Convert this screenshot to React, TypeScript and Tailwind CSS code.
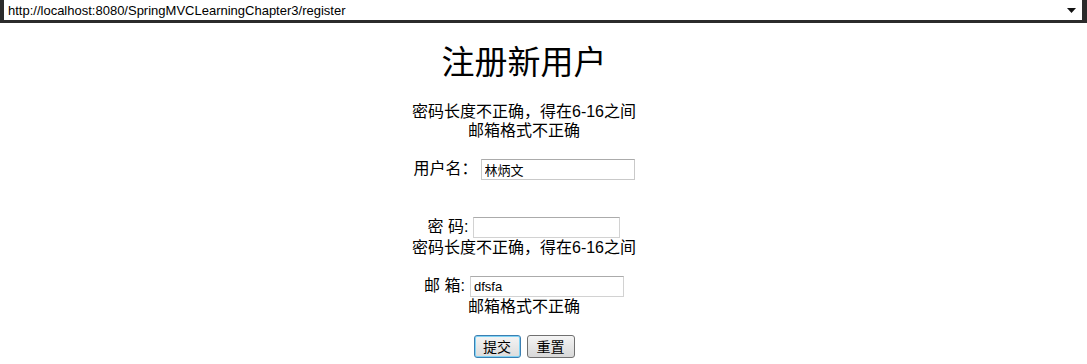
import React from 'react';

const body = "font-['Liberation_Sans','Noto_Sans_CJK_SC',sans-serif]";

export default function App() {
  return (
    <div className="min-h-screen w-full bg-white text-black">
      {/* Address bar */}
      <div className="h-[23px] bg-[#2b2b2b] px-[4px] pr-[5px] pb-[3px]">
        <div className="flex h-[20px] items-center justify-between bg-white pl-[4px] pr-[6px]">
          <span className="font-['Liberation_Sans',sans-serif] text-[13px] leading-none text-black">
            http://localhost:8080/SpringMVCLearningChapter3/register
          </span>
          <svg width="9" height="6" viewBox="0 0 9 6" className="mt-[2px]">
            <path d="M0 0 H9 L4.5 5 Z" fill="#111" />
          </svg>
        </div>
      </div>

      <div className={`flex w-[1048px] flex-col items-center ${body}`}>
        <h1 className="mt-[20px] h-[40px] text-[33px] leading-[40px] font-normal font-['Liberation_Serif','Noto_Sans_CJK_SC',serif]">
          注册新用户
        </h1>

        <div className="mt-[19px] text-center text-[16px] leading-[19px]">
          <div>密码长度不正确，得在6-16之间</div>
          <div>邮箱格式不正确</div>
        </div>

        {/* Username */}
        <div className="mt-[18px] flex h-[22px] items-center text-[16px]">
          <span>用户名：</span>
          <input
            readOnly
            value="林炳文"
            className="ml-[3px] h-[21px] w-[154px] border border-[#c9c9c9] border-t-[#ababab] px-[3px] text-[13px] outline-none"
          />
        </div>

        {/* Password */}
        <div className="mt-[36px] flex h-[22px] items-center text-[16px]">
          <span>密 码:</span>
          <input
            readOnly
            value=""
            className="ml-[5px] h-[21px] w-[147px] border border-[#d2d2d2] border-t-[#ababab] px-[3px] text-[13px] outline-none"
          />
        </div>
        <div className="text-[16px] leading-[19px]">密码长度不正确，得在6-16之间</div>

        {/* Email */}
        <div className="mt-[18px] flex h-[22px] items-center text-[16px]">
          <span>邮 箱:</span>
          <input
            readOnly
            value="dfsfa"
            className="ml-[5px] h-[21px] w-[154px] border border-[#d2d2d2] border-t-[#ababab] px-[3px] text-[13px] outline-none"
          />
        </div>
        <div className="text-[16px] leading-[19px]">邮箱格式不正确</div>

        {/* Buttons */}
        <div className="mt-[19px] flex gap-[6px]">
          <button className="h-[23px] w-[47px] rounded-[3px] border border-[#3c7fb1] bg-gradient-to-b from-[#f4f4f4] to-[#dcdcdc] text-[14px] leading-none shadow-[inset_0_0_0_1px_#7fd3f5]">
            提交
          </button>
          <button className="h-[23px] w-[48px] rounded-[3px] border border-[#707070] bg-gradient-to-b from-[#f4f4f4] to-[#d8d8d8] text-[14px] leading-none">
            重置
          </button>
        </div>
      </div>
    </div>
  );
}
